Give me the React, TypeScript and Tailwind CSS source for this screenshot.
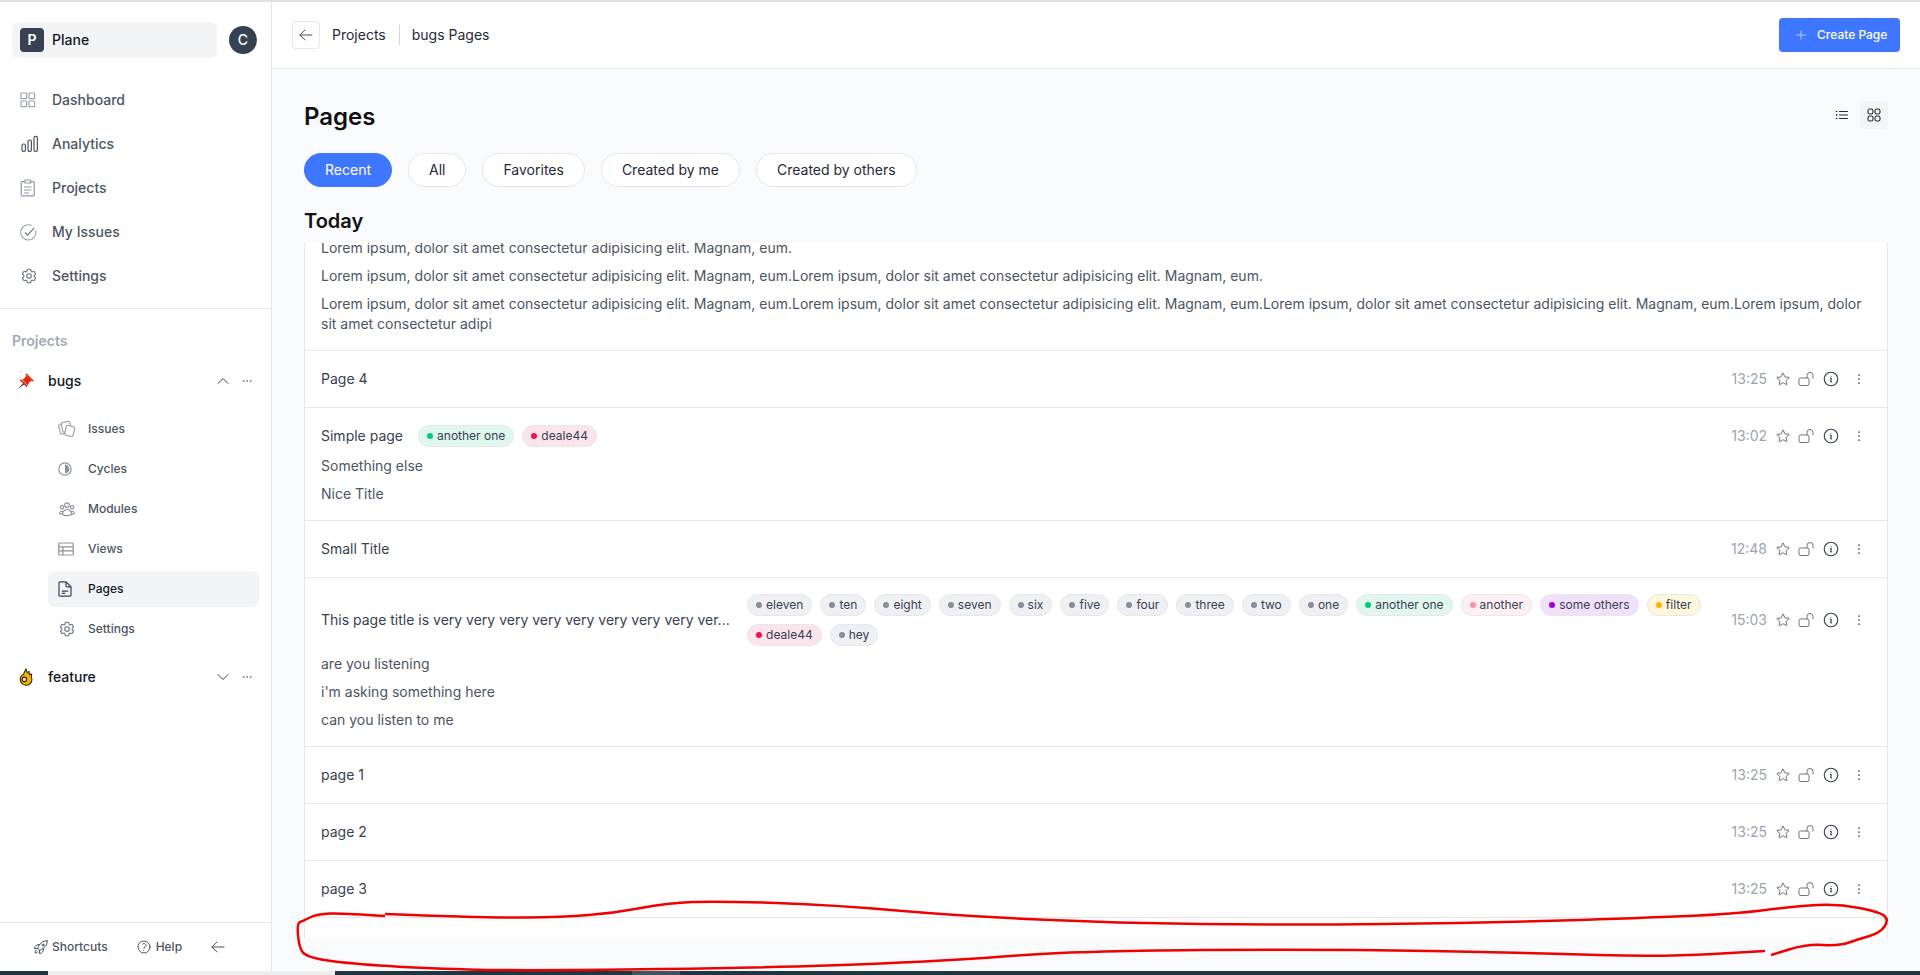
import React from 'react';
import {
  HiOutlineArrowLeft,
  HiOutlineCog6Tooth,
  HiOutlineEllipsisHorizontal,
  HiOutlineEllipsisVertical,
  HiOutlineChevronUp,
  HiOutlineChevronDown,
  HiOutlineInformationCircle,
  HiOutlineListBullet,
  HiOutlineLockOpen,
  HiOutlinePlus,
  HiOutlineQuestionMarkCircle,
  HiOutlineRocketLaunch,
  HiOutlineStar,
  HiOutlineUserGroup,
} from 'react-icons/hi2';

type Tag = { name: string; bg: string; dot: string };

const gray = (name: string): Tag => ({ name, bg: 'bg-[#eff0f3]', dot: 'bg-[#888d96]' });
const green = (name: string): Tag => ({ name, bg: 'bg-[#e0f7ee]', dot: 'bg-[#00cc7e]' });
const red = (name: string): Tag => ({ name, bg: 'bg-[#fce4ea]', dot: 'bg-[#f0124f]' });

const longTags: Tag[] = [
  gray('eleven'),
  gray('ten'),
  gray('eight'),
  gray('seven'),
  gray('six'),
  gray('five'),
  gray('four'),
  gray('three'),
  gray('two'),
  gray('one'),
  green('another one'),
  { name: 'another', bg: 'bg-[#fdf0f3]', dot: 'bg-[#ff8fab]' },
  { name: 'some others', bg: 'bg-[#f1e0fb]', dot: 'bg-[#a000f0]' },
  { name: 'filter', bg: 'bg-[#fff6de]', dot: 'bg-[#ffb400]' },
  red('deale44'),
  gray('hey'),
];

const DashboardIcon = () => (
  <svg width="16" height="16" viewBox="0 0 16 16" fill="none" stroke="#9ca3af" strokeWidth="1.2">
    <rect x="1" y="1" width="5.6" height="5.6" rx="0.6" />
    <rect x="9" y="1" width="5.6" height="5.6" rx="0.6" />
    <rect x="1" y="9" width="5.6" height="5.6" rx="0.6" />
    <rect x="9" y="9" width="5.6" height="5.6" rx="0.6" />
  </svg>
);

const AnalyticsIcon = () => (
  <svg className="ml-[1px]" width="18" height="18" viewBox="0 0 18 18" fill="none" stroke="#4b5563" strokeWidth="1.2">
    <rect x="1" y="9" width="3.4" height="7.4" rx="1.4" />
    <rect x="7" y="5" width="3.4" height="11.4" rx="1.4" />
    <rect x="13" y="1.4" width="3.4" height="15" rx="1.4" />
  </svg>
);

const ProjectsIcon = () => (
  <svg width="16" height="18" viewBox="0 0 16 18" fill="none" stroke="#9198a3" strokeWidth="1.2">
    <path d="M4.5 2.6H2.2a1 1 0 0 0-1 1v12.2a1 1 0 0 0 1 1h11a1 1 0 0 0 1-1V3.6a1 1 0 0 0-1-1h-2.3" />
    <rect x="4.8" y="1" width="5.8" height="3" rx="0.6" />
    <path d="M4 8h7.5M4 11h7.5M4 14h5" />
  </svg>
);

const MyIssuesIcon = () => (
  <svg width="17" height="17" viewBox="0 0 17 17" fill="none" stroke="#9ca3af" strokeWidth="1.1">
    <path d="M15.6 6.4A7.6 7.6 0 1 1 11.8 1.7" />
    <path d="M5 8.4l2.6 2.8 6.6-7.4" stroke="#6b7280" />
  </svg>
);

const IssuesIcon = () => (
  <svg width="18" height="18" viewBox="0 0 18 18" fill="#fff" stroke="#9ca3af" strokeWidth="1.2" strokeLinejoin="round">
    <rect x="1.4" y="3.6" width="8.6" height="10" rx="1.6" transform="rotate(-12 5.7 8.6)" />
    <rect x="4" y="1.8" width="8.6" height="10" rx="1.6" transform="rotate(-12 8.3 6.8)" />
    <rect x="7.4" y="6" width="8.6" height="10" rx="1.6" transform="rotate(14 11.7 11)" />
  </svg>
);

const CyclesIcon = () => (
  <svg width="14" height="14" viewBox="0 0 14 14" fill="none" stroke="#8b919c" strokeWidth="1.2">
    <circle cx="7" cy="7" r="6.2" />
    <path d="M7 2.6a4.4 4.4 0 0 1 0 8.8Z" fill="#8b919c" stroke="none" />
  </svg>
);

const ViewsIcon = () => (
  <svg width="16" height="14" viewBox="0 0 16 14" fill="none" stroke="#8b919c" strokeWidth="1.2">
    <rect x="0.8" y="1" width="14.4" height="12" rx="0.8" />
    <path d="M0.8 4.8h14.4M0.8 8.8h14.4M5 4.8V13" />
  </svg>
);

const PagesIcon = () => (
  <svg width="14" height="16" viewBox="0 0 14 16" fill="none" stroke="#374151" strokeWidth="1.2" strokeLinejoin="round">
    <path d="M2 .8h5.6a1 1 0 0 1 .7.3l4.4 4.4a1 1 0 0 1 .3.7v8a1 1 0 0 1-1 1H2a1 1 0 0 1-1-1V1.8a1 1 0 0 1 1-1Z" />
    <path d="M8 1v3.6a1.2 1.2 0 0 0 1.2 1.2H13" />
    <path d="M3.8 10.2h6.4M3.8 12.4h3.4" />
  </svg>
);

const GridIcon = () => (
  <svg width="14" height="14" viewBox="0 0 14 14" fill="none" stroke="#1f2937" strokeWidth="1.1">
    <rect x="1" y="1" width="5" height="5" rx="1.8" />
    <rect x="8" y="1" width="5" height="5" rx="1.8" />
    <rect x="1" y="8" width="5" height="5" rx="1.8" />
    <rect x="8" y="8" width="5" height="5" rx="1.8" />
  </svg>
);

const PinEmoji = () => (
  <svg className="ml-[-1px]" width="18" height="18" viewBox="0 0 18 18">
    <path d="M1 17 7 10.2l1.2 1.2Z" fill="#1f2937" />
    <path d="M5.2 7.6 7.6 6.2 10 2.6l5.6 5.4-3.4 2.6-1.4 2.6Z" fill="#e0290e" />
    <path d="M9.4 1.2 17 8.8l-1.4 1L8.2 2.4Z" fill="#f4401c" />
    <path d="M4 7.2l6.8 6.8-1.2 1L3 8.4Z" fill="#c9200a" />
  </svg>
);

const OkEmoji = () => (
  <svg width="16" height="18" viewBox="0 0 16 18">
    <path d="M8 .8 9.2 4.6 11 3.4l.4 3.2L13.6 6l-.2 3.6c.6 1.2.6 2.8 0 4.2-1 2.4-3.2 3.6-5.6 3.4-3-.2-5.6-2.6-5.6-5.8 0-2.4 1.2-4.2 3.2-5Z" fill="#f7b500" stroke="#3b2a05" strokeWidth="1.1" strokeLinejoin="round" />
    <circle cx="6.4" cy="11.4" r="2.2" fill="#fff3c4" stroke="#3b2a05" strokeWidth="1.2" />
  </svg>
);

const navItems = [
  { label: 'Dashboard', icon: <DashboardIcon /> },
  { label: 'Analytics', icon: <AnalyticsIcon /> },
  { label: 'Projects', icon: <ProjectsIcon /> },
  { label: 'My Issues', icon: <MyIssuesIcon /> },
  { label: 'Settings', icon: <HiOutlineCog6Tooth className="h-[18px] w-[18px] text-[#6b7280]" /> },
];

const subItems = [
  { label: 'Issues', icon: <IssuesIcon /> },
  { label: 'Cycles', icon: <CyclesIcon /> },
  { label: 'Modules', icon: <HiOutlineUserGroup className="h-[18px] w-[18px] text-[#8b919c]" /> },
  { label: 'Views', icon: <ViewsIcon /> },
  { label: 'Pages', icon: <PagesIcon />, active: true },
  { label: 'Settings', icon: <HiOutlineCog6Tooth className="h-[18px] w-[18px] text-[#6b7280]" /> },
];

const Sidebar = () => (
  <aside className="flex w-[272px] shrink-0 flex-col border-r border-[#e5e7eb] bg-white">
    <div className="flex items-center justify-between pl-3 pr-[14px] pt-5">
      <div className="flex h-9 w-[205px] items-center gap-2 rounded-md bg-[#f3f4f6] px-2">
        <div className="flex h-6 w-6 items-center justify-center rounded bg-[#374151] text-sm font-semibold text-white">P</div>
        <span className="text-sm font-medium text-[#111827]">Plane</span>
      </div>
      <div className="flex h-7 w-7 items-center justify-center rounded-full bg-[#374151] text-sm font-medium text-white">C</div>
    </div>

    <nav className="mt-[20px] flex flex-col border-b border-[#e5e7eb] pb-[10px]">
      {navItems.map((item) => (
        <div key={item.label} className="flex h-11 items-center pl-5">
          <span className="flex w-8 items-center">{item.icon}</span>
          <span className="text-sm font-medium text-[#4b5563]">{item.label}</span>
        </div>
      ))}
    </nav>

    <div className="flex-1">
      <div className="mt-[22px] pl-3 text-sm font-semibold leading-5 text-[#a3a9b5]">Projects</div>

      <div className="mt-[12px] flex h-9 items-center pl-[18px] pr-[17px]">
        <span className="flex w-[30px] items-center"><PinEmoji /></span>
        <span className="flex-1 text-sm font-medium text-[#111827]">bugs</span>
        <HiOutlineChevronUp className="h-4 w-4 text-[#374151]" />
        <HiOutlineEllipsisHorizontal className="ml-[9px] h-[14px] w-[14px] text-[#6b7280]" />
      </div>

      <div className="mt-[12px] flex flex-col gap-1 pl-12 pr-[12px]">
        {subItems.map((item) => (
          <div
            key={item.label}
            className={`flex h-9 items-center rounded-md pl-[10px] ${item.active ? 'bg-[#f3f4f6]' : ''}`}
          >
            <span className="flex w-[30px] items-center">{item.icon}</span>
            <span className={`text-xs font-medium ${item.active ? 'text-[#111827]' : 'text-[#4b5563]'}`}>{item.label}</span>
          </div>
        ))}
      </div>

      <div className="mt-[12px] flex h-9 items-center pl-[18px] pr-[17px]">
        <span className="flex w-[30px] items-center"><OkEmoji /></span>
        <span className="flex-1 text-sm font-medium text-[#111827]">feature</span>
        <HiOutlineChevronDown className="h-4 w-4 text-[#374151]" />
        <HiOutlineEllipsisHorizontal className="ml-[9px] h-[14px] w-[14px] text-[#6b7280]" />
      </div>
    </div>

    <div className="flex h-[49px] items-center border-t border-[#e5e7eb] pl-[33px] text-xs font-medium text-[#4b5563]">
      <HiOutlineRocketLaunch className="h-4 w-4" />
      <span className="ml-[3px]">Shortcuts</span>
      <HiOutlineQuestionMarkCircle className="ml-[28px] h-4 w-4" />
      <span className="ml-[4px]">Help</span>
      <HiOutlineArrowLeft className="ml-[28px] h-4 w-4" />
    </div>
  </aside>
);

const Pill = ({ tag }: { tag: Tag }) => (
  <span className={`flex h-[22px] items-center gap-1 rounded-full border border-[#e5e7eb] px-[8.05px] text-xs text-[#374151] ${tag.bg}`}>
    <span className={`h-[6px] w-[6px] rounded-full ${tag.dot}`} />
    {tag.name}
  </span>
);

const RowActions = ({ time }: { time: string }) => (
  <div className="flex h-6 shrink-0 items-center text-[#6b7280]">
    <span className="mr-[8px] text-sm text-[#9ca3af]">{time}</span>
    <HiOutlineStar className="h-4 w-4" />
    <HiOutlineLockOpen className="ml-[7px] h-4 w-4" />
    <HiOutlineInformationCircle className="ml-[8px] h-[18px] w-[18px] text-[#374151]" />
    <HiOutlineEllipsisVertical className="ml-[11px] mr-[20px] h-4 w-4" />
  </div>
);

type RowProps = { title?: string; titleWidth?: string; time?: string; tags?: Tag[]; lines?: string[] };

const Row = ({ title, titleWidth = '', time, tags, lines }: RowProps) => (
  <div className="border-b border-[#e5e7eb] p-4 pr-0 text-sm text-[#4b5563]">
    <div className="flex items-center justify-between">
      <div className="flex min-w-0 flex-1 items-center gap-4">
        <span className={`shrink-0 whitespace-nowrap leading-6 text-[#374151] ${titleWidth}`}>{title}</span>
        {tags && (
          <div className="flex flex-wrap gap-2 pr-4">
            {tags.map((tag) => <Pill key={tag.name} tag={tag} />)}
          </div>
        )}
      </div>
      <RowActions time={time ?? ''} />
    </div>
    {lines && (
      <div className="mt-2 flex flex-col gap-2 pr-4">
        {lines.map((line) => <p key={line} className="leading-5">{line}</p>)}
      </div>
    )}
  </div>
);

const lorem = 'Lorem ipsum, dolor sit amet consectetur adipisicing elit. Magnam, eum.';

const PageList = () => (
  <div className="mt-2 min-h-0 flex-1 overflow-hidden border-x border-[#e5e7eb] bg-white">
    <div className="mt-[-5px] border-b border-[#e5e7eb] pb-4 pl-4 pr-4 text-sm leading-5 text-[#4b5563]">
      <div className="flex flex-col gap-2">
        <p>{lorem}</p>
        <p>{lorem + lorem}</p>
        <p>{lorem + lorem + lorem}Lorem ipsum, dolor sit amet consectetur adipi</p>
      </div>
    </div>
    <Row title="Page 4" time="13:25" />
    <Row
      title="Simple page"
      titleWidth="w-[81px]"
      time="13:02"
      tags={[green('another one'), red('deale44')]}
      lines={['Something else', 'Nice Title']}
    />
    <Row title="Small Title" time="12:48" />
    <Row
      title="This page title is very very very very very very very very ver..."
      titleWidth="w-[410px]"
      time="15:03"
      tags={longTags}
      lines={['are you listening', "i'm asking something here", 'can you listen to me']}
    />
    <Row title="page 1" time="13:25" />
    <Row title="page 2" time="13:25" />
    <Row title="page 3" time="13:25" />
    <Row />
  </div>
);

const tabs = ['Recent', 'All', 'Favorites', 'Created by me', 'Created by others'];

// hand drawn marker ring over the bottom of the list
const markTop: [number, number][] = [
  [385, 914], [489, 918], [562, 917], [615, 913], [667, 903], [719, 901], [834, 905], [960, 916], [1117, 923],
  [1284, 925], [1483, 923], [1640, 918], [1734, 914], [1797, 906], [1839, 904], [1880, 912], [1889, 920],
  [1880, 933], [1859, 939], [1839, 946], [1807, 944], [1771, 955],
];
const markBottom: [number, number][] = [
  [385, 916], [343, 913], [317, 914], [303, 921], [297, 923], [299, 947], [306, 957], [343, 963], [416, 968],
  [521, 971], [803, 967], [960, 960], [1075, 951], [1326, 949], [1535, 953], [1661, 957], [1765, 951],
];

const smooth = (pts: [number, number][]) => {
  let d = `M${pts[0][0]} ${pts[0][1]}`;
  for (let i = 1; i < pts.length - 1; i++) {
    const mx = (pts[i][0] + pts[i + 1][0]) / 2;
    const my = (pts[i][1] + pts[i + 1][1]) / 2;
    d += ` Q${pts[i][0]} ${pts[i][1]} ${mx} ${my}`;
  }
  const last = pts[pts.length - 1];
  return `${d} L${last[0]} ${last[1]}`;
};

const App: React.FC = () => {
  return (
    <div className="relative flex h-[975px] w-[1920px] flex-col overflow-hidden bg-white font-[Inter,sans-serif]">
      <div className="h-[2px] shrink-0 bg-[#e0e0e0]" />
      <div className="flex min-h-0 flex-1">
        <Sidebar />
        <main className="flex min-w-0 flex-1 flex-col bg-[#f9fafc]">
          <header className="flex h-[67px] shrink-0 items-center justify-between border-b border-[#e5e7eb] bg-white pl-5 pr-5">
            <div className="flex items-center text-sm text-[#1f2937]">
              <div className="flex h-7 w-7 items-center justify-center rounded border border-[#e5e7eb]">
                <HiOutlineArrowLeft className="h-4 w-4 text-[#4b5563]" />
              </div>
              <span className="ml-3">Projects</span>
              <span className="ml-[13px] h-5 w-px bg-[#d1d5db]" />
              <span className="ml-3">bugs Pages</span>
            </div>
            <button className="flex h-[34px] w-[121px] items-center rounded bg-[#3f76ff] pl-[15px] text-xs font-medium text-white">
              <HiOutlinePlus className="h-[14px] w-[14px] opacity-70" />
              <span className="ml-[9px]">Create Page</span>
            </button>
          </header>

          <div className="flex min-h-0 flex-1 flex-col px-8 pb-8 pt-8">
            <div className="flex h-7 items-center justify-between">
              <h1 className="mt-[3px] text-2xl font-semibold text-[#111]">Pages</h1>
              <div className="flex items-center gap-1">
                <div className="flex h-7 w-7 items-center justify-center">
                  <HiOutlineListBullet className="h-4 w-4 text-[#1f2937]" />
                </div>
                <div className="flex h-7 w-7 items-center justify-center rounded bg-[#f3f4f6]">
                  <GridIcon />
                </div>
              </div>
            </div>

            <div className="mt-6 flex gap-4">
              {tabs.map((tab, i) => (
                <button
                  key={tab}
                  className={`h-[34px] rounded-full border px-5 text-sm ${
                    i === 0
                      ? 'border-[#3f76ff] bg-[#3f76ff] text-white'
                      : 'border-[#e5e7eb] bg-white text-[#1f2937]'
                  }`}
                >
                  {tab}
                </button>
              ))}
            </div>

            <h2 className="mt-5 text-xl font-semibold text-[#111]">Today</h2>
            <PageList />
          </div>
        </main>
      </div>

      <div className="flex h-[4px] shrink-0 bg-[#1e3640]">
        <div className="ml-[48px] w-[287px] bg-[#eeeeee]" />
        <div className="ml-[297px] w-[48px] bg-[#3c5560]" />
      </div>

      <svg className="pointer-events-none absolute left-0 top-0" width="1920" height="975" fill="none" stroke="#f00000" strokeWidth="2.5">
        <path d={smooth(markTop)} />
        <path d={smooth(markBottom)} />
      </svg>
    </div>
  );
};

export default App;
